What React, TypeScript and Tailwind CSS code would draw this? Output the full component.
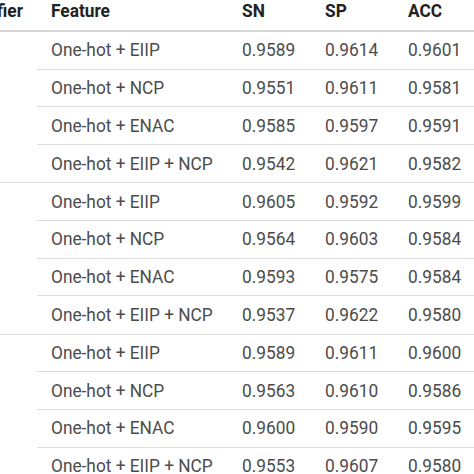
import React from 'react';

type Row = { feature: string; sn: string; sp: string; acc: string };

const groups: Row[][] = [
  [
    { feature: 'One-hot + EIIP', sn: '0.9589', sp: '0.9614', acc: '0.9601' },
    { feature: 'One-hot + NCP', sn: '0.9551', sp: '0.9611', acc: '0.9581' },
    { feature: 'One-hot + ENAC', sn: '0.9585', sp: '0.9597', acc: '0.9591' },
    { feature: 'One-hot + EIIP + NCP', sn: '0.9542', sp: '0.9621', acc: '0.9582' },
  ],
  [
    { feature: 'One-hot + EIIP', sn: '0.9605', sp: '0.9592', acc: '0.9599' },
    { feature: 'One-hot + NCP', sn: '0.9564', sp: '0.9603', acc: '0.9584' },
    { feature: 'One-hot + ENAC', sn: '0.9593', sp: '0.9575', acc: '0.9584' },
    { feature: 'One-hot + EIIP + NCP', sn: '0.9537', sp: '0.9622', acc: '0.9580' },
  ],
  [
    { feature: 'One-hot + EIIP', sn: '0.9589', sp: '0.9611', acc: '0.9600' },
    { feature: 'One-hot + NCP', sn: '0.9563', sp: '0.9610', acc: '0.9586' },
    { feature: 'One-hot + ENAC', sn: '0.9600', sp: '0.9590', acc: '0.9595' },
    { feature: 'One-hot + EIIP + NCP', sn: '0.9553', sp: '0.9607', acc: '0.9580' },
  ],
];

// the source table is a bit stretched vertically
const cell = 'pl-[14px] scale-y-[1.08]';

const Cells: React.FC<{ row: Row }> = ({ row }) => (
  <>
    <div className={`w-[191px] whitespace-nowrap ${cell}`}>{row.feature}</div>
    <div className={`w-[83px] ${cell}`}>{row.sn}</div>
    <div className={`w-[83px] ${cell}`}>{row.sp}</div>
    <div className={`flex-1 ${cell}`}>{row.acc}</div>
  </>
);

export default function App() {
  return (
    <div className="w-[474px] h-[474px] overflow-hidden bg-white font-['Roboto',sans-serif] text-[17.3px]">
      {/* Header */}
      <div className="flex items-center h-[32px] pb-[7px] border-b-2 border-[#d6d6d6] font-bold text-[#222]">
        <div className="w-[37px] flex justify-end overflow-hidden whitespace-nowrap pr-[14px] scale-y-[1.08]">Classifier</div>
        <div className={`w-[191px] ${cell}`}>Feature</div>
        <div className={`w-[83px] ${cell}`}>SN</div>
        <div className={`w-[83px] ${cell}`}>SP</div>
        <div className={`flex-1 ${cell}`}>ACC</div>
      </div>

      {/* Body */}
      {groups.map((group, gi) => (
        <div key={gi} className="border-b border-[#dedede]">
          {group.map((row, ri) => (
            <div key={ri} className="flex h-[37.6px] text-[#4c4c4c]">
              <div className="w-[37px] shrink-0" />
              <div
                className={
                  ri < group.length - 1
                    ? 'flex flex-1 items-center pt-[2px] border-b border-[#dedede]'
                    : 'flex flex-1 items-center pt-[2px]'
                }
              >
                <Cells row={row} />
              </div>
            </div>
          ))}
        </div>
      ))}
    </div>
  );
}
